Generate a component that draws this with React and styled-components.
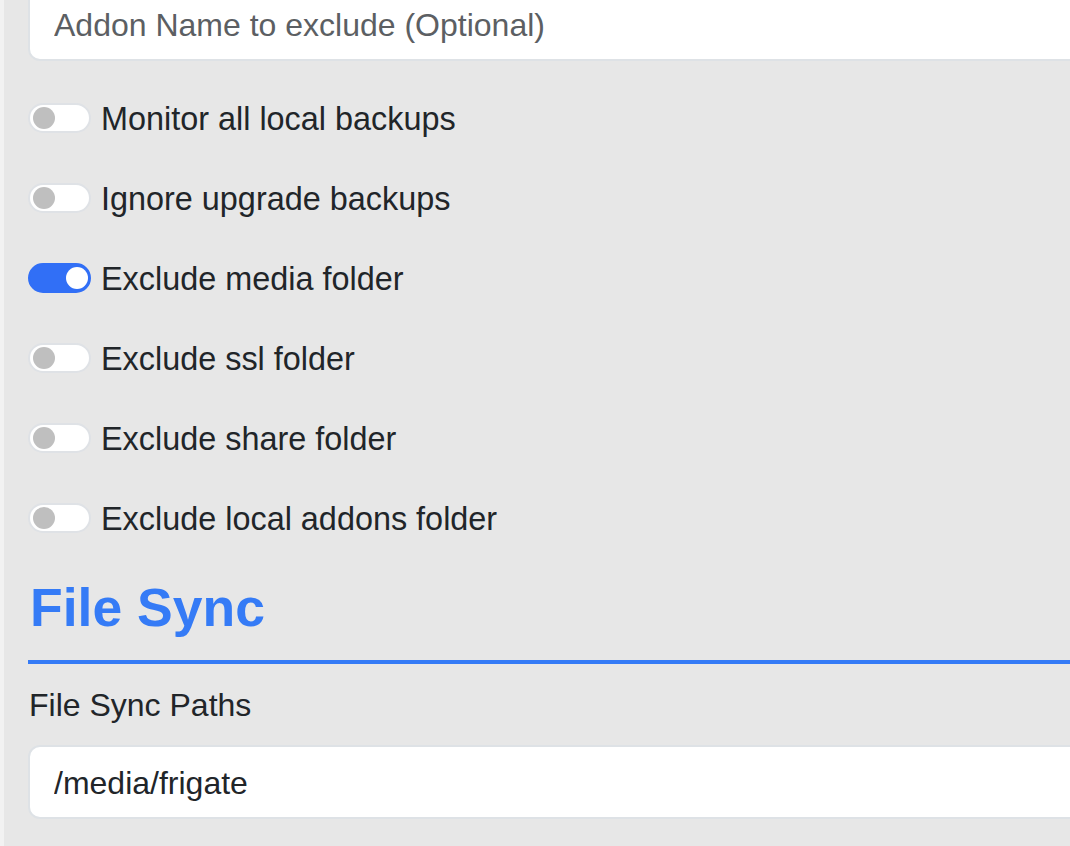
import React from "react";
import styled, { createGlobalStyle } from "styled-components";

const GlobalStyle = createGlobalStyle`
  html, body {
    margin: 0;
    padding: 0;
    background: #f2f2f2;
    overflow: hidden;
  }
  body {
    font-family: "Liberation Sans", Arial, Helvetica, sans-serif;
    color: #212529;
  }
`;

const Page = styled.div`
  display: flex;
  height: 846px;
  overflow: hidden;
`;

const Gutter = styled.div`
  flex: 0 0 4px;
  background: #f2f2f2;
`;

const Panel = styled.div`
  flex: 0 0 1200px;
  background: #e7e7e7;
  padding: 0 0 0 24px;
  margin-top: -13px;
  box-sizing: border-box;
`;

const TextInput = styled.input`
  display: block;
  width: 100%;
  box-sizing: border-box;
  height: 74px;
  padding: 13px 24px 11px;
  font-family: inherit;
  font-size: 32px;
  line-height: 48px;
  color: #212529;
  background: #fff;
  border: 2px solid #dee2e6;
  border-radius: 12px;
  outline: none;

  &::placeholder {
    color: #5c5f63;
    opacity: 1;
  }
`;

const SwitchList = styled.div`
  display: flex;
  flex-direction: column;
  gap: 32px;
  margin-top: 34px;
`;

const SwitchRow = styled.label`
  display: flex;
  align-items: center;
  gap: 10px;
  font-size: 32.4px;
  line-height: 48px;
`;

const Track = styled.span`
  position: relative;
  flex: 0 0 auto;
  width: 63px;
  height: 30px;
  margin-top: -3px;
  box-sizing: border-box;
  border-radius: 15px;
  border: 2px solid ${(p) => (p.on ? "#316ff6" : "#dfe2e6")};
  background: ${(p) => (p.on ? "#316ff6" : "#fff")};

  &::after {
    content: "";
    position: absolute;
    top: 2px;
    left: ${(p) => (p.on ? "36px" : "3px")};
    width: 22px;
    height: 22px;
    border-radius: 50%;
    background: ${(p) => (p.on ? "#fff" : "#bfbfbf")};
  }
`;

const SectionTitle = styled.h3`
  margin: 31px 0 0;
  padding: 0 0 18px 2px;
  font-size: 53.5px;
  line-height: 68px;
  font-weight: 700;
  color: #357bf6;
  border-bottom: 4px solid #357bf6;
`;

const FieldLabel = styled.div`
  margin: 17px 0 16px 1px;
  font-size: 32px;
  line-height: 48px;
`;

const switches = [
  { label: "Monitor all local backups", on: false },
  { label: "Ignore upgrade backups", on: false },
  { label: "Exclude media folder", on: true },
  { label: "Exclude ssl folder", on: false },
  { label: "Exclude share folder", on: false },
  { label: "Exclude local addons folder", on: false },
];

const App = () => {
  return (
    <>
      <GlobalStyle />
      <Page>
        <Gutter />
        <Panel>
          <TextInput placeholder="Addon Name to exclude (Optional)" />
          <SwitchList>
            {switches.map((s) => (
              <SwitchRow key={s.label}>
                <Track on={s.on ? 1 : 0} />
                {s.label}
              </SwitchRow>
            ))}
          </SwitchList>
          <SectionTitle>File Sync</SectionTitle>
          <FieldLabel>File Sync Paths</FieldLabel>
          <TextInput defaultValue="/media/frigate" />
        </Panel>
      </Page>
    </>
  );
};

export default App;
